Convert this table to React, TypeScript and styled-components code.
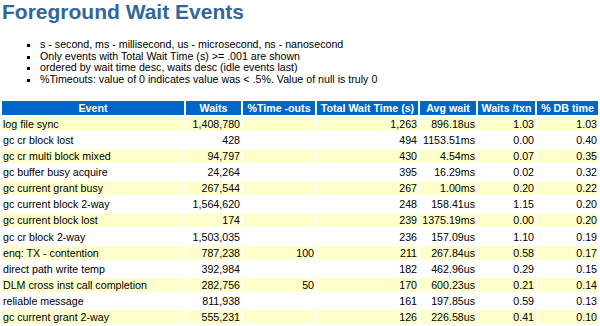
import React from 'react'
import styled, {createGlobalStyle} from 'styled-components'

const rows = [
  ['log file sync', '1,408,780', '', '1,263', '896.18us', '1.03', '1.03'],
  ['gc cr block lost', '428', '', '494', '1153.51ms', '0.00', '0.40'],
  ['gc cr multi block mixed', '94,797', '', '430', '4.54ms', '0.07', '0.35'],
  ['gc buffer busy acquire', '24,264', '', '395', '16.29ms', '0.02', '0.32'],
  ['gc current grant busy', '267,544', '', '267', '1.00ms', '0.20', '0.22'],
  ['gc current block 2-way', '1,564,620', '', '248', '158.41us', '1.15', '0.20'],
  ['gc current block lost', '174', '', '239', '1375.19ms', '0.00', '0.20'],
  ['gc cr block 2-way', '1,503,035', '', '236', '157.09us', '1.10', '0.19'],
  ['enq: TX - contention', '787,238', '100', '211', '267.84us', '0.58', '0.17'],
  ['direct path write temp', '392,984', '', '182', '462.96us', '0.29', '0.15'],
  ['DLM cross inst call completion', '282,756', '50', '170', '600.23us', '0.21', '0.14'],
  ['reliable message', '811,938', '', '161', '197.85us', '0.59', '0.13'],
  ['gc current grant 2-way', '555,231', '', '126', '226.58us', '0.41', '0.10'],
]

const headers = ['Event', 'Waits', '%Time -outs', 'Total Wait Time (s)', 'Avg wait', 'Waits /txn', '% DB time']
const widths = [182, 55, 72, 101, 56, 57, 61]

const App = () => {
  return (
    <Page>
      <Global />
      <Title>Foreground Wait Events</Title>
      <Notes>
        <li>s - second, ms - millisecond, us - microsecond, ns - nanosecond</li>
        <li>Only events with Total Wait Time (s) &gt;= .001 are shown</li>
        <li>ordered by wait time desc, waits desc (idle events last)</li>
        <li>%Timeouts: value of 0 indicates value was &lt; .5%. Value of null is truly 0</li>
      </Notes>
      <Table>
        <colgroup>
          {widths.map((w, i) => <col key={i} style={{width: w}} />)}
        </colgroup>
        <thead>
          <tr>
            {headers.map(h => <Th key={h}>{h}</Th>)}
          </tr>
        </thead>
        <tbody>
          {rows.map((r, i) => (
            <tr key={r[0]}>
              {r.map((c, j) => (
                <Td key={j} $shaded={i % 2 === 0} $text={j === 0}>{c}</Td>
              ))}
            </tr>
          ))}
        </tbody>
      </Table>
    </Page>
  )
}

export default App

const Global = createGlobalStyle`
body {
  margin: 0;
  background: white;
  font-family: Arial, "Liberation Sans", sans-serif;
}
`;

const Page = styled.div`
width: 600px;
`;

const Title = styled.h2`
margin: 0;
font: bold 21px Arial, "Liberation Sans", sans-serif;
line-height: 24px;
color: #336699;
padding-left: 2px;
`;

const Notes = styled.ul`
margin: 15px 0 0 0;
padding-left: 40px;
font-size: 8pt;
line-height: 11.7px;
color: black;
list-style: square;
`;

const Table = styled.table`
margin-top: 13px;
width: 600px;
table-layout: fixed;
border-spacing: 2px;
border-collapse: separate;
`;

const Th = styled.th`
background: #0066cc;
color: white;
font: bold 8pt Arial, "Liberation Sans", sans-serif;
height: 14px;
padding: 0 1px;
white-space: nowrap;
text-align: center;
`;

const Td = styled.td<{$shaded: boolean; $text: boolean}>`
background: ${p => (p.$shaded ? '#ffffcc' : 'white')};
color: black;
font: 8pt Arial, "Liberation Sans", sans-serif;
height: 14.1px;
padding: 0 1px;
white-space: nowrap;
text-align: ${p => (p.$text ? 'left' : 'right')};
`;
